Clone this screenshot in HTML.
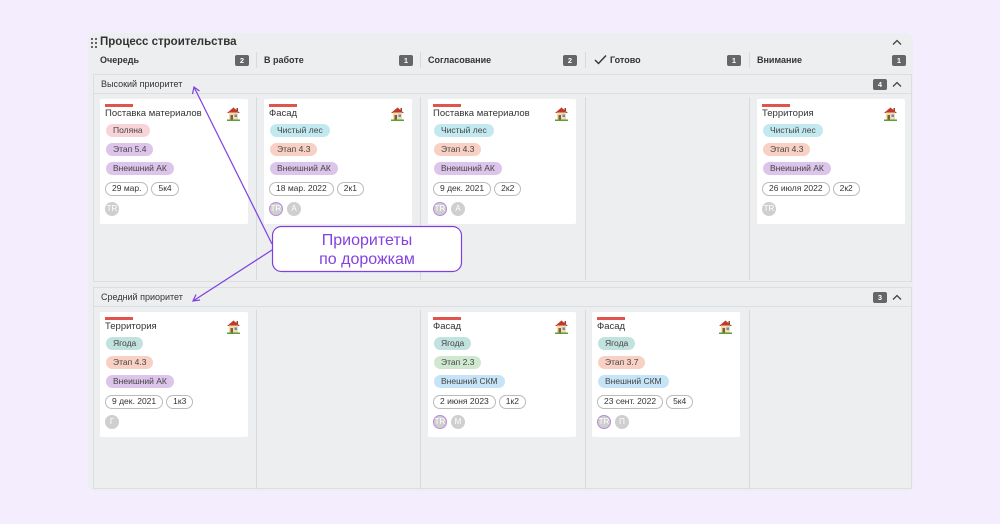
<!DOCTYPE html>
<html><head><meta charset="utf-8">
<style>
*{box-sizing:border-box;margin:0;padding:0}
body{width:1000px;height:524px;background:#f4edfd;font-family:"Liberation Sans",sans-serif;position:relative;overflow:hidden;color:#333}
.panel{position:absolute;left:88px;top:33px;width:825px;height:458px;background:#eceef0;border-radius:8px}
.a{position:absolute}
.title{left:100px;top:36px;font-size:11.5px;font-weight:bold;color:#333}
.colh{font-size:9px;font-weight:bold;top:55px;color:#333}
.cnt{width:14px;height:11px;background:#666;color:#fff;font-size:7.5px;border-radius:2px;text-align:center;line-height:11px;font-weight:bold}
.sep{width:1px;background:#d8dadc}
.lh{left:93px;width:819px;height:20px;border:1px solid #dcdee0;background:#eceef0;font-size:9px;color:#333;padding-left:7px;line-height:18px}
.card{position:absolute;width:148px;height:125px;background:#fff;border-radius:2px}
.bar{position:absolute;left:5px;top:5px;width:28px;height:2.5px;background:#e0544d}
.ct{position:absolute;left:5px;top:9px;font-size:9.5px;color:#333}
.hs{position:absolute;left:126px;top:7px}
.chip{position:absolute;left:6px;height:13px;border-radius:7px;font-size:8.5px;line-height:13px;padding:0 7px;color:#444}
.pills{position:absolute;left:5px;top:83px;display:flex;gap:3px}
.pill{height:13.5px;border:1px solid #bbb;border-radius:7px;font-size:8.5px;line-height:11.5px;padding:0 6px;color:#333}
.avs{position:absolute;left:5px;top:102.5px;display:flex;gap:4px}
.av{width:14px;height:14px;border-radius:50%;background:#cfcfcf;color:#fff;font-size:8px;line-height:14px;text-align:center}
.av.b{border:1px solid #b98ad6;line-height:12px}
.pk{background:#f8d3d8}.pu{background:#dcc4ea}.cy{background:#c2e8f0}.or{background:#f8d0c4}.te{background:#c1e2de}.gr{background:#cfe8cf}.bl{background:#c6e4f7}
</style></head><body>
<div class="panel"></div>
<svg class="a" style="left:90px;top:37px" width="8" height="12"><g fill="#555"><circle cx="2" cy="2" r="1.1"/><circle cx="6" cy="2" r="1.1"/><circle cx="2" cy="6" r="1.1"/><circle cx="6" cy="6" r="1.1"/><circle cx="2" cy="10" r="1.1"/><circle cx="6" cy="10" r="1.1"/></g></svg>
<div class="a title">Процесс строительства</div>
<svg class="a" style="left:892px;top:39px" width="10" height="7"><path d="M1 5.5L5 1.5L9 5.5" fill="none" stroke="#444" stroke-width="1.3"/></svg>

<div class="a colh" style="left:100px">Очередь</div><div class="a cnt" style="left:235px;top:55px">2</div>
<div class="a sep" style="left:256px;top:52px;height:16px"></div>
<div class="a colh" style="left:264px">В работе</div><div class="a cnt" style="left:399px;top:55px">1</div>
<div class="a sep" style="left:420px;top:52px;height:16px"></div>
<div class="a colh" style="left:428px">Согласование</div><div class="a cnt" style="left:563px;top:55px">2</div>
<div class="a sep" style="left:585px;top:52px;height:16px"></div>
<svg class="a" style="left:594px;top:54px" width="13" height="11"><path d="M1 6L4.5 9.5L12 1.5" fill="none" stroke="#333" stroke-width="1.4"/></svg>
<div class="a colh" style="left:610px">Готово</div><div class="a cnt" style="left:727px;top:55px">1</div>
<div class="a sep" style="left:749px;top:52px;height:16px"></div>
<div class="a colh" style="left:757px">Внимание</div><div class="a cnt" style="left:892px;top:55px">1</div>

<div class="a lh" style="top:74px">Высокий приоритет</div>
<div class="a cnt" style="left:873px;top:79px">4</div>
<svg class="a" style="left:892px;top:81px" width="10" height="7"><path d="M1 5.5L5 1.5L9 5.5" fill="none" stroke="#444" stroke-width="1.3"/></svg>
<div class="a" style="left:93px;top:94px;width:819px;height:188px;border:1px solid #dcdee0;border-top:none"></div>
<div class="a sep" style="left:256px;top:97px;height:183px"></div>
<div class="a sep" style="left:420px;top:97px;height:183px"></div>
<div class="a sep" style="left:585px;top:97px;height:183px"></div>
<div class="a sep" style="left:749px;top:97px;height:183px"></div>

<div class="a lh" style="top:287px">Средний приоритет</div>
<div class="a cnt" style="left:873px;top:292px">3</div>
<svg class="a" style="left:892px;top:294px" width="10" height="7"><path d="M1 5.5L5 1.5L9 5.5" fill="none" stroke="#444" stroke-width="1.3"/></svg>
<div class="a" style="left:93px;top:307px;width:819px;height:182px;border:1px solid #dcdee0;border-top:none"></div>
<div class="a sep" style="left:256px;top:310px;height:179px"></div>
<div class="a sep" style="left:420px;top:310px;height:179px"></div>
<div class="a sep" style="left:585px;top:310px;height:179px"></div>
<div class="a sep" style="left:749px;top:310px;height:179px"></div>

<svg width="0" height="0" style="position:absolute"><defs><g id="h"><path d="M1 7L7.5 1.5L14 7" fill="#c0392b"/><rect x="3" y="6.5" width="9" height="7" fill="#f3dcae"/><rect x="4.5" y="9" width="2.5" height="4.5" fill="#8b5a2b"/><rect x="8.5" y="8.5" width="2.5" height="2.5" fill="#5a8fd0"/><rect x="1" y="13.5" width="13" height="1.5" fill="#5a9e3a"/><rect x="10.5" y="2" width="1.5" height="3" fill="#8b4a2b"/></g></defs></svg>

<div class="card" style="left:100px;top:99px"><div class="bar"></div><div class="ct">Поставка материалов</div><svg class="hs" width="15" height="15"><use href="#h"/></svg>
<div class="chip pk" style="top:25px">Поляна</div><div class="chip pu" style="top:44px">Этап 5.4</div><div class="chip pu" style="top:63px">Внеишний АК</div>
<div class="pills"><div class="pill">29 мар.</div><div class="pill">5к4</div></div><div class="avs"><div class="av">TR</div></div></div>

<div class="card" style="left:264px;top:99px"><div class="bar"></div><div class="ct">Фасад</div><svg class="hs" width="15" height="15"><use href="#h"/></svg>
<div class="chip cy" style="top:25px">Чистый лес</div><div class="chip or" style="top:44px">Этап 4.3</div><div class="chip pu" style="top:63px">Внеишний АК</div>
<div class="pills"><div class="pill">18 мар. 2022</div><div class="pill">2к1</div></div><div class="avs"><div class="av b">TR</div><div class="av">A</div></div></div>

<div class="card" style="left:428px;top:99px"><div class="bar"></div><div class="ct">Поставка материалов</div><svg class="hs" width="15" height="15"><use href="#h"/></svg>
<div class="chip cy" style="top:25px">Чистый лес</div><div class="chip or" style="top:44px">Этап 4.3</div><div class="chip pu" style="top:63px">Внеишний АК</div>
<div class="pills"><div class="pill">9 дек. 2021</div><div class="pill">2к2</div></div><div class="avs"><div class="av b">TR</div><div class="av">A</div></div></div>

<div class="card" style="left:757px;top:99px"><div class="bar"></div><div class="ct">Территория</div><svg class="hs" width="15" height="15"><use href="#h"/></svg>
<div class="chip cy" style="top:25px">Чистый лес</div><div class="chip or" style="top:44px">Этап 4.3</div><div class="chip pu" style="top:63px">Внеишний АК</div>
<div class="pills"><div class="pill">26 июля 2022</div><div class="pill">2к2</div></div><div class="avs"><div class="av">TR</div></div></div>

<div class="card" style="left:100px;top:312px"><div class="bar"></div><div class="ct">Территория</div><svg class="hs" width="15" height="15"><use href="#h"/></svg>
<div class="chip te" style="top:25px">Ягода</div><div class="chip or" style="top:44px">Этап 4.3</div><div class="chip pu" style="top:63px">Внеишний АК</div>
<div class="pills"><div class="pill">9 дек. 2021</div><div class="pill">1к3</div></div><div class="avs"><div class="av">Г</div></div></div>

<div class="card" style="left:428px;top:312px"><div class="bar"></div><div class="ct">Фасад</div><svg class="hs" width="15" height="15"><use href="#h"/></svg>
<div class="chip te" style="top:25px">Ягода</div><div class="chip gr" style="top:44px">Этап 2.3</div><div class="chip bl" style="top:63px">Внешний СКМ</div>
<div class="pills"><div class="pill">2 июня 2023</div><div class="pill">1к2</div></div><div class="avs"><div class="av b">TR</div><div class="av">M</div></div></div>

<div class="card" style="left:592px;top:312px"><div class="bar"></div><div class="ct">Фасад</div><svg class="hs" width="15" height="15"><use href="#h"/></svg>
<div class="chip te" style="top:25px">Ягода</div><div class="chip or" style="top:44px">Этап 3.7</div><div class="chip bl" style="top:63px">Внешний СКМ</div>
<div class="pills"><div class="pill">23 сент. 2022</div><div class="pill">5к4</div></div><div class="avs"><div class="av b">TR</div><div class="av">П</div></div></div>

<svg class="a" style="left:0;top:0" width="1000" height="524">
<g stroke="#8040e0" stroke-width="1.2" fill="none">
<path d="M272 244L194 87"/><path d="M192.5 94L194 87L199.5 91"/>
<path d="M272 250L193 301"/><path d="M200 300L193 301L196 294.5"/>
</g>
<rect x="272.5" y="226.5" width="189" height="45" rx="9" fill="#fff" stroke="#8040e0" stroke-width="1.2"/>
<text x="367" y="245" text-anchor="middle" font-family="Liberation Sans, sans-serif" font-size="16" fill="#8540e0">Приоритеты</text>
<text x="367" y="264" text-anchor="middle" font-family="Liberation Sans, sans-serif" font-size="16" fill="#8540e0">по дорожкам</text>
</svg>
</body></html>
